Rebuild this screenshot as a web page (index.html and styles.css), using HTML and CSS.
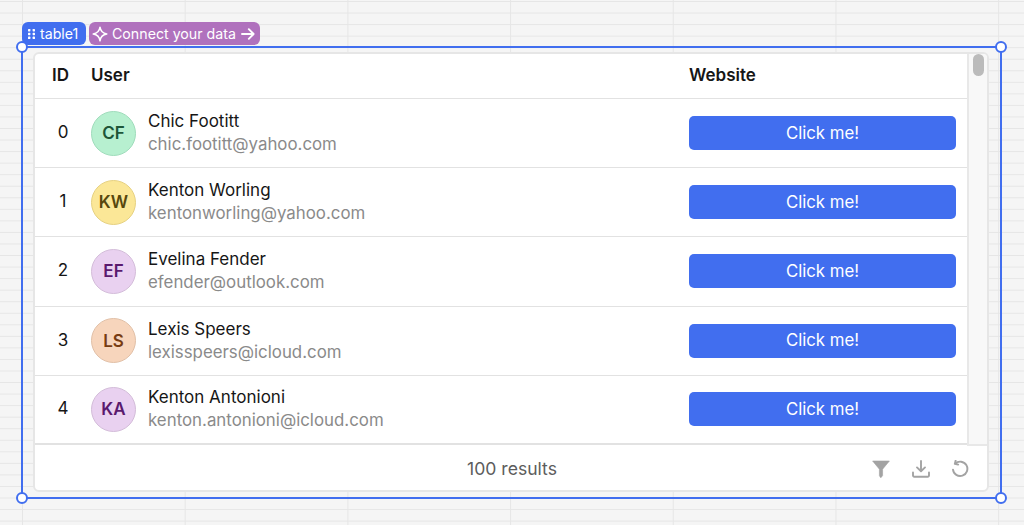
FILE: index.html
```html
<!DOCTYPE html>
<html lang="en">
<head>
  <meta charset="UTF-8">
  <title>table1</title>
  <link rel="stylesheet" href="styles.css">
</head>
<body>
  <div class="tags">
    <div class="tag tag-name">
      <svg class="grip" width="8" height="10" viewBox="0 0 8 10"><g fill="#fff"><rect x="0" y="0" width="2.4" height="2.4" rx=".6"/><rect x="4.6" y="0" width="2.4" height="2.4" rx=".6"/><rect x="0" y="3.8" width="2.4" height="2.4" rx=".6"/><rect x="4.6" y="3.8" width="2.4" height="2.4" rx=".6"/><rect x="0" y="7.6" width="2.4" height="2.4" rx=".6"/><rect x="4.6" y="7.6" width="2.4" height="2.4" rx=".6"/></g></svg>
      table1
    </div>
    <div class="tag tag-connect">
      <svg width="16" height="16" viewBox="0 0 16 16"><path d="M8 1.2C8.6 5.4 10.6 7.4 14.8 8C10.6 8.6 8.6 10.6 8 14.8C7.4 10.6 5.4 8.6 1.2 8C5.4 7.4 7.4 5.4 8 1.2Z" fill="none" stroke="#fff" stroke-width="1.5" stroke-linejoin="round"/></svg>
      <span>Connect your data</span>
      <svg width="14" height="12" viewBox="0 0 14 12"><path d="M1 6H12.5M7.8 1.2L12.6 6L7.8 10.8" fill="none" stroke="#fff" stroke-width="1.9" stroke-linecap="round" stroke-linejoin="round"/></svg>
    </div>
  </div>

  <div class="frame">
    <span class="handle h-tl"></span>
    <span class="handle h-tr"></span>
    <span class="handle h-bl"></span>
    <span class="handle h-br"></span>

    <div class="card">
      <div class="card-body">
        <div class="rows">
          <div class="row head">
            <div class="col-id">ID</div>
            <div>User</div>
            <div>Website</div>
          </div>

          <div class="row">
            <div class="col-id">0</div>
            <div class="user">
              <div class="avatar green">CF</div>
              <div class="info"><div class="name">Chic Footitt</div><div class="email">chic.footitt@yahoo.com</div></div>
            </div>
            <button class="btn">Click me!</button>
          </div>

          <div class="row">
            <div class="col-id">1</div>
            <div class="user">
              <div class="avatar yellow">KW</div>
              <div class="info"><div class="name">Kenton Worling</div><div class="email">kentonworling@yahoo.com</div></div>
            </div>
            <button class="btn">Click me!</button>
          </div>

          <div class="row">
            <div class="col-id">2</div>
            <div class="user">
              <div class="avatar purple">EF</div>
              <div class="info"><div class="name">Evelina Fender</div><div class="email">efender@outlook.com</div></div>
            </div>
            <button class="btn">Click me!</button>
          </div>

          <div class="row">
            <div class="col-id">3</div>
            <div class="user">
              <div class="avatar orange">LS</div>
              <div class="info"><div class="name">Lexis Speers</div><div class="email">lexisspeers@icloud.com</div></div>
            </div>
            <button class="btn">Click me!</button>
          </div>

          <div class="row last">
            <div class="col-id">4</div>
            <div class="user">
              <div class="avatar purple">KA</div>
              <div class="info"><div class="name">Kenton Antonioni</div><div class="email">kenton.antonioni@icloud.com</div></div>
            </div>
            <button class="btn">Click me!</button>
          </div>
        </div>
        <div class="scrollbar"><div class="thumb"></div></div>
      </div>

      <div class="footer">
        <div class="results">100 results</div>
        <div class="tools">
          <svg width="20" height="18" viewBox="0 0 20 18"><path d="M1.6 1H18.4L11.6 9.2V15.6L10.2 17.4H9.4L8.4 15.6V9.2Z" fill="#a3a3a3" stroke="#a3a3a3" stroke-width=".6" stroke-linejoin="round"/></svg>
          <svg width="20" height="18" viewBox="0 0 20 18"><path d="M10 1V11M6 7.4L10 11.2L14 7.4M2 12.5V15.6A1.2 1.2 0 0 0 3.2 16.8H16.8A1.2 1.2 0 0 0 18 15.6V12.5" fill="none" stroke="#a3a3a3" stroke-width="1.9" stroke-linecap="round" stroke-linejoin="round"/></svg>
          <svg width="20" height="18" viewBox="1 0 20 18"><path d="M5.2 3.6A7.2 7.2 0 1 1 3 9.6M5.6 0.6L4.8 3.9L8.2 4.6" fill="none" stroke="#a3a3a3" stroke-width="1.9" stroke-linecap="round" stroke-linejoin="round"/></svg>
        </div>
      </div>
    </div>
  </div>
</body>
</html>
```

FILE: styles.css
```css
* {
  box-sizing: border-box;
}
html, body {
  height: 525px;
  overflow: hidden;
}
body {
  margin: 0;
  padding: 22px 22px 0 21px;
  font-family: Inter, "Liberation Sans", sans-serif;
  color: #161616;
  background-color: #f5f5f5;
  background-image:
    linear-gradient(to right, #e6e6e6 1px, transparent 1px),
    linear-gradient(to bottom, #e6e6e6 1px, transparent 1px);
  background-size: 162.7px 100%, 100% 11.55px;
  background-position: 22px 0, 0 1px;
}

/* tags above the frame */
.tags {
  display: flex;
  gap: 3px;
  height: 24px;
  padding-left: 1px;
}
.tag {
  display: flex;
  align-items: center;
  height: 23px;
  border-radius: 6px;
  color: #fff;
  font-size: 14.2px;
}
.tag-name {
  width: 64px;
  padding-left: 6px;
  gap: 4px;
  background: #416eef;
}
.tag-connect {
  width: 171px;
  padding-left: 3px;
  gap: 4px;
  background: #b071bd;
}
.tag-connect span {
  margin-right: 1px;
}

/* selection frame */
.frame {
  position: relative;
  width: 981px;
  height: 453px;
  border: 2px solid #416eef;
  padding: 4px 11px 5px 10px;
}
.handle {
  position: absolute;
  width: 12px;
  height: 12px;
  border-radius: 50%;
  background: #fff;
  border: 2px solid #416eef;
}
.h-tl { left: -7px; top: -7px; }
.h-tr { right: -7px; top: -7px; }
.h-bl { left: -7px; bottom: -7px; }
.h-br { right: -7px; bottom: -7px; }

/* table card */
.card {
  display: flex;
  flex-direction: column;
  height: 100%;
  border: 2px solid #e6e6e6;
  border-radius: 6px;
  background: #fff;
  overflow: hidden;
}
.card-body {
  display: flex;
  height: 392px;
}
.rows {
  width: 935px;
  border-right: 2px solid #e8e8e8;
}
.scrollbar {
  flex: 1;
  background: #f8f8f8;
  border-bottom: 2px solid #e8e8e8;
  padding: 0 3px 0 4px;
}
.thumb {
  width: 11px;
  height: 22px;
  border-radius: 6px;
  background: #bbbbbb;
}
.row {
  display: grid;
  grid-template-columns: 56px 598px 267px;
  align-items: center;
  height: 69.2px;
  border-bottom: 1.5px solid #e2e2e2;
  font-size: 17px;
}
.row.head {
  height: 45px;
  padding-bottom: 2px;
  font-weight: 600;
}
.row.last {
  border-bottom-width: 2px;
}
.col-id {
  padding-bottom: 2px;
  text-align: center;
}
.head .col-id {
  padding-right: 22px;
  padding-bottom: 0;
  text-align: right;
}

.user {
  display: flex;
  align-items: center;
  gap: 12px;
}
.avatar {
  display: flex;
  align-items: center;
  justify-content: center;
  width: 45px;
  height: 45px;
  border-radius: 50%;
  border: 1.5px solid;
  font-weight: 600;
}
.green { background: #b7f0d0; border-color: #9fdcbb; color: #1d5638; }
.yellow { background: #fbe797; border-color: #e6d181; color: #57470e; }
.purple { background: #e9d1f0; border-color: #d3bcd9; color: #5a1a6e; }
.orange { background: #f7d5bc; border-color: #e1c0a7; color: #773c12; }

.name {
  font-size: 17px;
  line-height: 23px;
}
.email {
  font-size: 16.85px;
  line-height: 23px;
  color: #8a8a8a;
}
.btn {
  height: 34px;
  padding-bottom: 2px;
  border: 0;
  border-radius: 5px;
  background: #416eef;
  color: #fff;
  font-family: inherit;
  font-size: 16.8px;
}

/* footer */
.footer {
  position: relative;
  display: flex;
  flex: 1;
  align-items: center;
  justify-content: center;
  padding-left: 2px;
}
.results {
  font-size: 17.6px;
  color: #5c5c5c;
}
.tools {
  position: absolute;
  right: 16px;
  top: 14px;
  display: flex;
  gap: 20px;
}
```
